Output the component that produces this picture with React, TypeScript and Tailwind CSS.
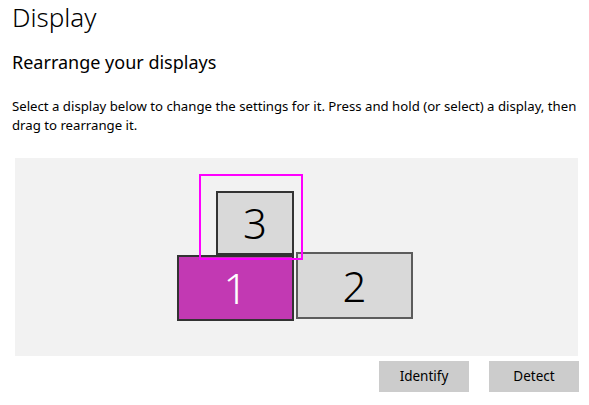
import React from "react";

const font = { fontFamily: '"Noto Sans", "Open Sans", sans-serif' };

type Screen = {
    id: string;
    box: string;
    selected?: boolean;
};

const screens: Screen[] = [
    { id: "3", box: "left-[201px] top-[33px] w-[78px] h-[64px] border-[#333333] bg-[#d9d9d9] text-black" },
    { id: "2", box: "left-[281px] top-[94px] w-[117px] h-[67px] border-[#5c5c5c] bg-[#d9d9d9] text-black" },
    { id: "1", box: "left-[162px] top-[97px] w-[117px] h-[66px] border-[#333333] bg-[#c239b3] text-white", selected: true },
];

function DisplayTile({ id, box }: Screen) {
    return (
        <div className={`absolute flex items-center justify-center border-2 ${box}`}>
            <span className="text-[42px] font-light leading-none">{id}</span>
        </div>
    );
}

export default function App() {
    return (
        <div className="relative w-[589px] h-[405px] overflow-hidden bg-white text-black" style={font}>
            <div className="px-3">
                <h1 className="text-[26px] font-light leading-[32px] pt-[1px]">Display</h1>
                <h2 className="mt-[16px] text-[18px] leading-[26px]">Rearrange your displays</h2>
                <p className="mt-[22px] text-[13.2px] leading-[19px] whitespace-nowrap">
                    Select a display below to change the settings for it. Press and hold (or select) a display, then
                    <br />
                    drag to rearrange it.
                </p>
            </div>

            <div className="relative mx-[15px] mt-[23px] w-[563px] h-[198px] bg-[#f2f2f2]">
                {screens.map((s) => (
                    <DisplayTile key={s.id} {...s} />
                ))}
                {/* selection outline around display 3 */}
                <div className="absolute left-[184px] top-[16px] w-[104px] h-[86px] border-2 border-[#ff00ff]" />
            </div>

            <div className="flex justify-end gap-5 pr-[10px] mt-[5px]">
                <button className="w-[90px] h-[31px] bg-[#cccccc] text-[13.5px]">Identify</button>
                <button className="w-[90px] h-[31px] bg-[#cccccc] text-[13.5px]">Detect</button>
            </div>
        </div>
    );
}
